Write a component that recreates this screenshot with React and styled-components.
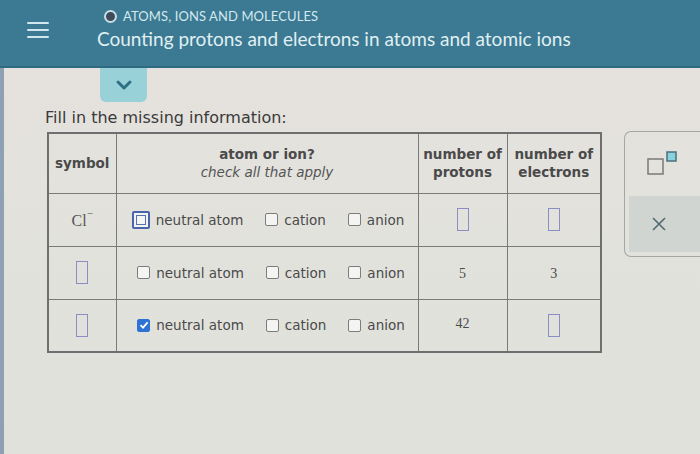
import React from 'react';
import styled, { createGlobalStyle } from 'styled-components';

const GlobalStyle = createGlobalStyle`
  html, body {
    margin: 0;
    padding: 0;
  }
  body {
    width: 700px;
    height: 454px;
    overflow: hidden;
    background: #e2e1dc;
  }
`;

const Page = styled.div`
  width: 700px;
  height: 454px;
  overflow: hidden;
  background: linear-gradient(180deg, #e7e1de 0%, #e3e2dd 40%, #dfe1da 100%);
  display: flex;
  flex-direction: column;
`;

const Header = styled.header`
  height: 68px;
  flex-shrink: 0;
  background: #3b7a92;
  display: flex;
  align-items: center;
  padding-left: 27px;
  box-sizing: border-box;
  border-bottom: 2px solid #2f6a80;
`;

const Hamburger = styled.div`
  width: 22px;
  display: flex;
  flex-direction: column;
  gap: 5px;
  margin-top: -6px;

  span {
    display: block;
    height: 2px;
    background: #d3e7ee;
    border-radius: 1px;
  }
`;

const Titles = styled.div`
  margin-left: 48px;
  display: flex;
  flex-direction: column;
  gap: 3px;
  margin-top: -8px;
`;

const Topic = styled.div`
  display: flex;
  align-items: center;
  gap: 6px;
  margin-left: 7px;
  font-family: Lato, "Open Sans", sans-serif;
  font-size: 13px;
  color: #d4e8ef;
  letter-spacing: 0.1px;
`;

const Dot = styled.span`
  width: 9px;
  height: 9px;
  border-radius: 50%;
  background: #3d4b5a;
  border: 2px solid #c9dde4;
`;

const Title = styled.h1`
  margin: 0;
  font-family: Lato, "Open Sans", sans-serif;
  font-weight: 400;
  font-size: 19px;
  color: #e0eff3;
`;

const Body = styled.div`
  flex: 1;
  display: flex;
  flex-direction: column;
  border-left: 4px solid #8fa0b3;
`;

const Tab = styled.div`
  width: 47px;
  height: 34px;
  margin-left: 96px;
  background: #98d2d8;
  border-radius: 0 0 6px 6px;
  display: flex;
  align-items: center;
  justify-content: center;
`;

const Workspace = styled.div`
  display: flex;
  align-items: flex-start;
  padding-left: 41px;
  margin-top: 6px;
`;

const Question = styled.div`
  display: flex;
  flex-direction: column;
  gap: 5px;
`;

const Prompt = styled.p`
  margin: 0;
  font-family: "DejaVu Sans", Verdana, sans-serif;
  font-size: 16px;
  color: #3a3a3a;
`;

const Table = styled.table`
  border-collapse: collapse;
  table-layout: fixed;
  width: 553px;
  margin-left: 2px;
  border: 2px solid #6f6f6f;
  font-family: "DejaVu Sans", Verdana, sans-serif;
  color: #444;
`;

const Th = styled.th`
  border: 1px solid #7a7a7a;
  height: 60px;
  padding: 0;
  font-size: 13.5px;
  font-weight: bold;
  color: #4a4a4a;
  text-align: center;
  line-height: 18px;
  box-sizing: border-box;
`;

const Hint = styled.span`
  display: block;
  font-weight: normal;
  font-style: italic;
  color: #555;
`;

const Td = styled.td`
  border: 1px solid #7a7a7a;
  height: 53px;
  padding: 0;
  text-align: center;
  box-sizing: border-box;
`;

const Symbol = styled.span`
  font-family: "Liberation Serif", "Times New Roman", serif;
  font-size: 16px;
  color: #555;

  sup {
    font-size: 11px;
    position: relative;
    top: -2px;
  }
`;

const Num = styled.span`
  font-family: "Liberation Serif", "Times New Roman", serif;
  font-size: 14px;
  color: #4a4a4a;
  position: relative;
  top: ${p => p.$up || 0}px;
`;

const Slot = styled.span`
  display: inline-block;
  width: 10px;
  height: 21px;
  border: 1.5px solid #8a8ec4;
  vertical-align: middle;
`;

const Choices = styled.div`
  display: flex;
  align-items: center;
  justify-content: center;
  gap: 22px;
  padding-left: ${p => p.$pad}px;
`;

const Choice = styled.label`
  display: flex;
  align-items: center;
  gap: 6px;
  font-size: 13.5px;
  color: #4a4a4a;
`;

const Box = styled.span`
  width: 13px;
  height: 13px;
  box-sizing: border-box;
  border: 1px solid #7c7c7c;
  border-radius: 2px;
  background: #f4f4f2;
  display: inline-flex;
  align-items: center;
  justify-content: center;

  ${p => p.$focus && `
    width: 18px;
    height: 18px;
    border: 2px solid #4a64a8;
    box-shadow: inset 0 0 0 2px #f2f2f2, inset 0 0 0 3px #5a6fae;
    border-radius: 2px;
  `}

  ${p => p.$checked && `
    background: #2f72d6;
    border-color: #2f72d6;
  `}
`;

const Tools = styled.div`
  margin-left: 22px;
  width: 100px;
  height: 126px;
  border: 1.5px solid #a4a7a4;
  border-radius: 7px 0 0 7px;
  border-right: none;
  display: flex;
  flex-direction: column;
  box-sizing: border-box;
  margin-top: 23px;
`;

const ToolTop = styled.div`
  height: 64px;
  display: flex;
  align-items: center;
  padding-left: 22px;
`;

const ClearButton = styled.div`
  flex: 1;
  margin: 0 0 4px 4px;
  background: #d1d5d1;
  display: flex;
  align-items: center;
  padding-left: 22px;
`;

const Check = () => (
  <svg width="10" height="10" viewBox="0 0 10 10">
    <path d="M1.5 5.2 L4 7.6 L8.6 2.4" stroke="#fff" strokeWidth="1.8" fill="none" />
  </svg>
);

const rows = [
  { symbol: <Symbol>Cl<sup>−</sup></Symbol>, focus: true, checked: false, protons: null, electrons: null, pad: 2 },
  { symbol: <Slot />, checked: false, protons: '5', electrons: '3', pad: 8 },
  { symbol: <Slot />, checked: true, protons: '42', electrons: null, pad: 8 },
];

const App = () => {
  return (
    <Page>
      <GlobalStyle />
      <Header>
        <Hamburger>
          <span />
          <span />
          <span />
        </Hamburger>
        <Titles>
          <Topic>
            <Dot />
            ATOMS, IONS AND MOLECULES
          </Topic>
          <Title>Counting protons and electrons in atoms and atomic ions</Title>
        </Titles>
      </Header>
      <Body>
        <Tab>
          <svg width="18" height="12" viewBox="0 0 18 12">
            <path d="M3 3 L9 9 L15 3" stroke="#2f6f86" strokeWidth="3" fill="none" strokeLinecap="round" strokeLinejoin="round" />
          </svg>
        </Tab>
        <Workspace>
          <Question>
            <Prompt>Fill in the missing information:</Prompt>
            <Table>
              <colgroup>
                <col style={{ width: 68 }} />
                <col style={{ width: 302 }} />
                <col style={{ width: 89 }} />
                <col style={{ width: 94 }} />
              </colgroup>
              <thead>
                <tr>
                  <Th>symbol</Th>
                  <Th>
                    atom or ion?
                    <Hint>check all that apply</Hint>
                  </Th>
                  <Th>number of<br />protons</Th>
                  <Th>number of<br />electrons</Th>
                </tr>
              </thead>
              <tbody>
                {rows.map((r, i) => (
                  <tr key={i}>
                    <Td>{r.symbol}</Td>
                    <Td>
                      <Choices $pad={r.pad}>
                        <Choice>
                          <Box $focus={r.focus} $checked={r.checked}>{r.checked && <Check />}</Box>
                          neutral atom
                        </Choice>
                        <Choice>
                          <Box />
                          cation
                        </Choice>
                        <Choice>
                          <Box />
                          anion
                        </Choice>
                      </Choices>
                    </Td>
                    <Td>{r.protons ? <Num $up={i === 2 ? -3 : 0}>{r.protons}</Num> : <Slot />}</Td>
                    <Td>{r.electrons ? <Num>{r.electrons}</Num> : <Slot />}</Td>
                  </tr>
                ))}
              </tbody>
            </Table>
          </Question>
          <Tools>
            <ToolTop>
              <svg width="32" height="26" viewBox="0 0 32 26">
                <rect x="1" y="8" width="15" height="15" fill="none" stroke="#7a7a7a" strokeWidth="1.5" />
                <rect x="20" y="1" width="9" height="9" fill="#86d3df" stroke="#4e6f7a" strokeWidth="1.5" />
              </svg>
            </ToolTop>
            <ClearButton>
              <svg width="16" height="16" viewBox="0 0 16 16">
                <path d="M2 2 L14 14 M14 2 L2 14" stroke="#4f6a72" strokeWidth="1.6" />
              </svg>
            </ClearButton>
          </Tools>
        </Workspace>
      </Body>
    </Page>
  );
};

export default App;
